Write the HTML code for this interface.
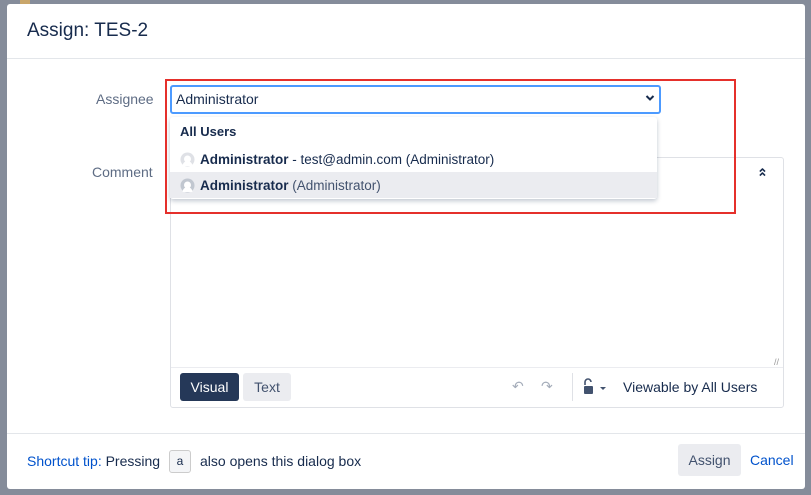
<!DOCTYPE html>
<html><head><style>
body{margin:0;width:811px;height:495px;background:#858c9a;font-family:"Liberation Sans",sans-serif;position:relative;overflow:hidden;color:#172b4d}
.a{position:absolute}
.dlg{left:7px;top:4px;width:798px;height:485px;background:#fff;border-radius:3px}
</style></head><body>
<div class="a" style="left:20px;top:0;width:10px;height:4px;background:#c9a66b"></div>
<div class="a dlg"></div>
<div class="a" style="left:27px;top:20px;font-size:19px;color:#172b4d">Assign: TES-2</div>
<div class="a" style="left:7px;top:58px;width:798px;height:1px;background:#e3e6ea"></div>
<div class="a" style="left:96px;top:91px;font-size:14px;color:#5e6c84">Assignee</div>
<div class="a" style="left:92px;top:164px;font-size:14px;color:#5e6c84">Comment</div>
<!-- comment editor -->
<div class="a" style="left:170px;top:157px;width:612px;height:249px;border:1px solid #dfe1e6;border-radius:3px"></div>
<div class="a" style="left:757px;top:170px;font-size:13px;font-weight:bold">&#8963;</div>
<div class="a" style="left:757px;top:166px;font-size:13px;font-weight:bold">&#8963;</div>
<div class="a" style="left:171px;top:367px;width:612px;height:1px;background:#ebecf0"></div>
<div class="a" style="left:774px;top:357px;font-size:9px;color:#999">//</div>
<div class="a" style="left:180px;top:373px;width:59px;height:28px;background:#253858;border-radius:3px;color:#fff;font-size:14px;line-height:28px;text-align:center">Visual</div>
<div class="a" style="left:243px;top:373px;width:48px;height:28px;background:#ebecf0;border-radius:3px;color:#42526e;font-size:14px;line-height:28px;text-align:center">Text</div>
<div class="a" style="left:512px;top:378px;font-size:14px;color:#a5adba">&#8630;</div>
<div class="a" style="left:541px;top:378px;font-size:14px;color:#a5adba">&#8631;</div>
<div class="a" style="left:572px;top:373px;width:1px;height:28px;background:#dfe1e6"></div>
<svg class="a" style="left:582px;top:378px" width="30" height="18"><path d="M3 7V4a3 3 0 0 1 6 0" stroke="#42526e" stroke-width="1.6" fill="none"/><rect x="2" y="8" width="9" height="8" rx="1" fill="#42526e"/><path d="M18 9l3 3 3-3z" fill="#42526e"/></svg>
<div class="a" style="left:623px;top:379px;font-size:14px;color:#172b4d">Viewable by All Users</div>
<!-- select -->
<div class="a" style="left:170px;top:85px;width:487px;height:25px;border:2px solid #4c9aff;border-radius:3px"></div>
<div class="a" style="left:176px;top:91px;font-size:14px">Administrator</div>
<svg class="a" style="left:645px;top:94px" width="10" height="8"><path d="M1.5 2l3.5 3.5L8.5 2" stroke="#172b4d" stroke-width="2" fill="none"/></svg>
<!-- dropdown -->
<div class="a" style="left:170px;top:117px;width:487px;height:82px;background:#fff;border-radius:3px;box-shadow:0 2px 5px rgba(9,30,66,.25)"></div>
<div class="a" style="left:170px;top:172px;width:487px;height:26px;background:#ebecf0"></div>
<div class="a" style="left:180px;top:124px;font-size:13px;font-weight:bold">All Users</div>
<svg class="a" style="left:180px;top:152px" width="15" height="15"><circle cx="7.5" cy="7.5" r="7" fill="#dfe1e6"/><circle cx="7.5" cy="7" r="3.5" fill="#fff"/><path d="M2.5 14a5 5 0 0 1 10 0z" fill="#fff"/></svg>
<div class="a" style="left:200px;top:152px;font-size:13.5px"><b>Administrator</b> - test@admin.com (Administrator)</div>
<svg class="a" style="left:180px;top:178px" width="15" height="15"><circle cx="7.5" cy="7.5" r="7" fill="#c1c7d0"/><circle cx="7.5" cy="7" r="3.5" fill="#fff"/><path d="M2.5 14a5 5 0 0 1 10 0z" fill="#fff"/></svg>
<div class="a" style="left:200px;top:178px;font-size:13.5px"><b>Administrator</b> <span style="color:#42526e">(Administrator)</span></div>
<!-- red box -->
<div class="a" style="left:165px;top:79px;width:567px;height:131px;border:2px solid #e5302b"></div>
<!-- footer -->
<div class="a" style="left:7px;top:433px;width:798px;height:1px;background:#e3e6ea"></div>
<div class="a" style="left:27px;top:453px;font-size:14px"><span style="color:#0052cc">Shortcut tip:</span> Pressing</div>
<div class="a" style="left:169px;top:450px;width:20px;height:21px;border:1px solid #ccc;border-radius:3px;background:#f4f5f7;font-size:12px;text-align:center;line-height:21px">a</div>
<div class="a" style="left:200px;top:453px;font-size:14px">also opens this dialog box</div>
<div class="a" style="left:678px;top:444px;width:63px;height:32px;background:#ebecf0;border-radius:3px;font-size:14px;color:#42526e;text-align:center;line-height:32px">Assign</div>
<div class="a" style="left:750px;top:452px;font-size:14px;color:#0052cc">Cancel</div>
</body></html>
